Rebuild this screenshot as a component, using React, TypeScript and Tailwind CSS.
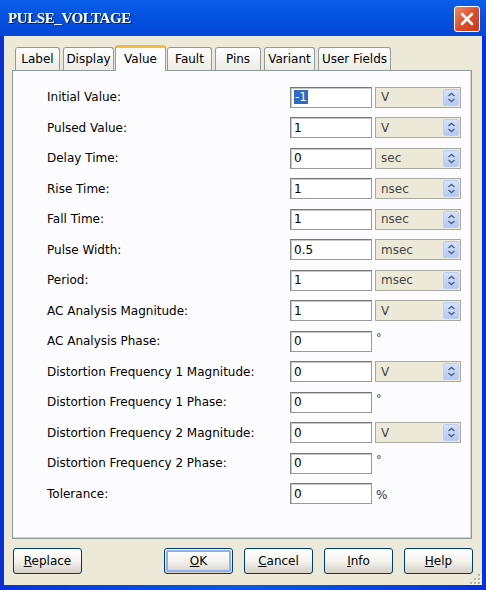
import React from 'react';

type Row = { label: string; value: string; unit?: string; suffix?: string; selected?: boolean };

const rows: Row[] = [
  { label: 'Initial Value:', value: '-1', unit: 'V', selected: true },
  { label: 'Pulsed Value:', value: '1', unit: 'V' },
  { label: 'Delay Time:', value: '0', unit: 'sec' },
  { label: 'Rise Time:', value: '1', unit: 'nsec' },
  { label: 'Fall Time:', value: '1', unit: 'nsec' },
  { label: 'Pulse Width:', value: '0.5', unit: 'msec' },
  { label: 'Period:', value: '1', unit: 'msec' },
  { label: 'AC Analysis Magnitude:', value: '1', unit: 'V' },
  { label: 'AC Analysis Phase:', value: '0', suffix: '°' },
  { label: 'Distortion Frequency 1 Magnitude:', value: '0', unit: 'V' },
  { label: 'Distortion Frequency 1 Phase:', value: '0', suffix: '°' },
  { label: 'Distortion Frequency 2 Magnitude:', value: '0', unit: 'V' },
  { label: 'Distortion Frequency 2 Phase:', value: '0', suffix: '°' },
  { label: 'Tolerance:', value: '0', suffix: '%' },
];

// tab name, width, left margin
const tabs: [string, string][] = [
  ['Label', 'w-[45px] ml-0'],
  ['Display', 'w-[51px] ml-[3px]'],
  ['Value', 'w-[51px] ml-[1px]'],
  ['Fault', 'w-[45px] ml-[1px]'],
  ['Pins', 'w-[46px] ml-[3px]'],
  ['Variant', 'w-[51px] ml-[3px]'],
  ['User Fields', 'w-[73px] ml-[3px]'],
];

function Spinner() {
  return (
    <div className="w-[16px] h-[17px] rounded-[2px] bg-gradient-to-b from-[#d6e2fb] to-[#b4c9f5] border border-[#bccdf1] flex items-center justify-center">
      <svg width="9" height="11" viewBox="0 0 9 11">
        <path d="M1.5 4 L4.5 1.5 L7.5 4" stroke="#4d6185" strokeWidth="1.4" fill="none" />
        <path d="M1.5 7 L4.5 9.5 L7.5 7" stroke="#4d6185" strokeWidth="1.4" fill="none" />
      </svg>
    </div>
  );
}

function Field({ row }: { row: Row }) {
  return (
    <div className="h-[30.5px] flex items-center">
      <div className="w-[243px] shrink-0 text-[12px] text-black">{row.label}</div>
      <div className="w-[82px] shrink-0 h-[21px] bg-white border border-[#999] border-t-[#777] border-l-[#888] shadow-[inset_1px_1px_0_#c8c8c8] flex items-center px-[3px] text-[12px]">
        {row.selected ? (
          <span className="bg-[#316ac5] text-white px-[1px] leading-[14px]">{row.value}</span>
        ) : (
          <span>{row.value}</span>
        )}
      </div>
      {row.unit && (
        <div className="ml-[3px] w-[86px] shrink-0 h-[21px] bg-[#ece9d8] border border-[#a9a99f] flex items-center justify-between pl-[5px] pr-[1px] text-[12px] text-[#444]">
          <span>{row.unit}</span>
          <Spinner />
        </div>
      )}
      {row.suffix && (
        <div className={`ml-[4px] text-[#333] ${row.suffix === '%' ? 'text-[12px] mt-[2px]' : 'text-[11px] -mt-[6px]'}`}>{row.suffix}</div>
      )}
    </div>
  );
}

function Btn({ children, focus }: { children: React.ReactNode; focus?: boolean }) {
  return (
    <div className="w-[69px] h-[26px] rounded-[3px] border border-[#003c74] bg-gradient-to-b from-[#ffffff] via-[#f4f3ee] to-[#d6d0c5] p-[1px]">
      <div className={`w-full h-full rounded-[2px] flex items-center justify-center text-[12px] text-black ${focus ? 'border-2 border-[#8fb0ec]' : ''}`}>
        {children}
      </div>
    </div>
  );
}

export default function App() {
  return (
    <div className="w-[486px] h-[590px] bg-gradient-to-r from-[#0831d9] via-[#0a5ae6] to-[#0831d9] flex flex-col overflow-hidden" style={{ fontFamily: 'Tahoma, "DejaVu Sans", "Liberation Sans", sans-serif' }}>
      {/* title bar */}
      <div className="h-[36px] shrink-0 bg-gradient-to-b from-[#0a5fe9] via-[#0550e0] to-[#0447d6] flex items-center justify-between pl-[8px] pr-[6px]">
        <div className="text-white font-bold text-[15px] tracking-[-0.4px] drop-shadow-[1px_1px_0_#0a1e6e]" style={{ fontFamily: '"Liberation Serif", "DejaVu Serif", serif' }}>
          PULSE_VOLTAGE
        </div>
        <div className="w-[26px] h-[26px] mt-[2px] rounded-[3px] border border-white bg-gradient-to-br from-[#e98a6d] via-[#dd4e2a] to-[#c53a16] flex items-center justify-center">
          <svg width="16" height="16" viewBox="0 0 16 16">
            <path d="M3 3 L13 13 M13 3 L3 13" stroke="white" strokeWidth="2.6" strokeLinecap="round" />
          </svg>
        </div>
      </div>

      {/* body */}
      <div className="flex-1 mx-[4px] mb-[5px] bg-[#ece9d8] flex flex-col pl-[8px] pr-[10px] pt-[8px]">
        {/* tabs */}
        <div className="h-[26px] flex items-end pl-[3px] relative z-10">
          {tabs.map(([t, cls]) => {
            const sel = t === 'Value';
            return (
              <div
                key={t}
                className={`${cls} ${
                  sel
                    ? 'h-[26px] flex items-center justify-center text-[12px] bg-[#fcfcfe] border border-b-0 border-[#919b9c] border-t-[3px] border-t-[#f5bc43] rounded-t-[3px] -mb-[1px] pb-[2px]'
                    : 'h-[23px] flex items-center justify-center text-[12px] bg-gradient-to-b from-[#ffffff] to-[#ecebe5] border border-b-0 border-[#919b9c] rounded-t-[3px]'
                }`}
              >
                {t}
              </div>
            );
          })}
        </div>
        {/* panel */}
        <div className="h-[469px] bg-[#fcfcfe] border border-[#919b9c] shadow-[inset_-1px_-1px_0_#d0d0cc] pl-[34px] pt-[11px]">
          {rows.map((r) => (
            <Field key={r.label} row={r} />
          ))}
        </div>

        {/* buttons */}
        <div className="flex items-center mt-[9px] pl-[1px]">
          <Btn>
            <span><u>R</u>eplace</span>
          </Btn>
          <div className="flex-1" />
          <div className="flex gap-[11px] mr-[-1px]">
            <Btn focus>
              <span><u>O</u>K</span>
            </Btn>
            <Btn>
              <span><u>C</u>ancel</span>
            </Btn>
            <Btn>
              <span><u>I</u>nfo</span>
            </Btn>
            <Btn>
              <span><u>H</u>elp</span>
            </Btn>
          </div>
        </div>
        <div className="flex-1 flex items-end justify-end -mr-[9px]">
          <svg width="11" height="11" viewBox="0 0 11 11">
            {[[8, 8], [4, 8], [8, 4], [0, 8], [4, 4], [8, 0]].map(([x, y], i) => (
              <g key={i}>
                <rect x={x + 1} y={y + 1} width="2" height="2" fill="#fff" />
                <rect x={x} y={y} width="2" height="2" fill="#b8b4a2" />
              </g>
            ))}
          </svg>
        </div>
      </div>
    </div>
  );
}
